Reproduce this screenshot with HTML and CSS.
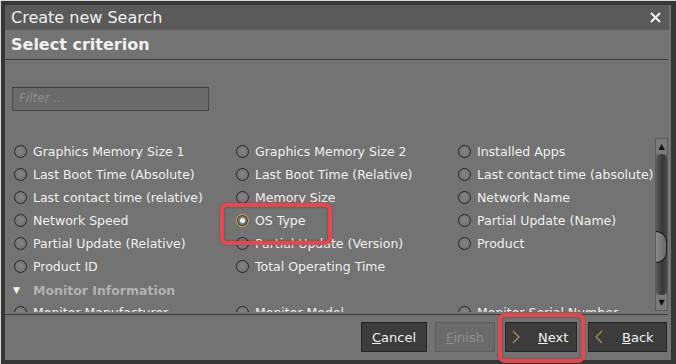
FILE: index.html
```html
<!DOCTYPE html>
<html>
<head>
<meta charset="utf-8">
<link rel="stylesheet" href="styles.css">
</head>
<body>
<div class="window">
  <div class="dialog">
    <div class="titlebar">
      <span class="title">Create new Search</span>
      <svg class="close" width="11" height="11" viewBox="0 0 11 11"><path d="M1 1 L10 10 M10 1 L1 10" stroke="#f4f4f4" stroke-width="2"/></svg>
    </div>
    <div class="header">Select criterion</div>
    <div class="content">
      <div class="filter">Filter ...</div>
      <div class="listarea">
        <div class="list">
          <div class="item"><span class="radio"></span>Graphics Memory Size 1</div>
          <div class="item"><span class="radio"></span>Graphics Memory Size 2</div>
          <div class="item"><span class="radio"></span>Installed Apps</div>
          <div class="item"><span class="radio"></span>Last Boot Time (Absolute)</div>
          <div class="item"><span class="radio"></span>Last Boot Time (Relative)</div>
          <div class="item"><span class="radio"></span>Last contact time (absolute)</div>
          <div class="item"><span class="radio"></span>Last contact time (relative)</div>
          <div class="item"><span class="radio"></span>Memory Size</div>
          <div class="item"><span class="radio"></span>Network Name</div>
          <div class="item"><span class="radio"></span>Network Speed</div>
          <div class="item"><span class="radio checked"></span>OS Type</div>
          <div class="item"><span class="radio"></span>Partial Update (Name)</div>
          <div class="item"><span class="radio"></span>Partial Update (Relative)</div>
          <div class="item"><span class="radio"></span>Partial Update (Version)</div>
          <div class="item"><span class="radio"></span>Product</div>
          <div class="item"><span class="radio"></span>Product ID</div>
          <div class="item"><span class="radio"></span>Total Operating Time</div>
          <div class="item"></div>
          <div class="group"><span class="tri">&#9660;</span>Monitor Information</div>
          <div class="item"><span class="radio"></span>Monitor Manufacturer</div>
          <div class="item"><span class="radio"></span>Monitor Model</div>
          <div class="item"><span class="radio"></span>Monitor Serial Number</div>
        </div>
        <div class="scrollbar">
          <div class="sb-btn">&#9650;</div>
          <div class="sb-track"><div class="sb-thumb"></div></div>
          <div class="sb-btn">&#9660;</div>
        </div>
      </div>
    </div>
    <div class="footer">
      <div class="btn cancel"><u>C</u>ancel</div>
      <div class="btn finish"><u>F</u>inish</div>
      <div class="btn next"><svg class="chev" width="8" height="14" viewBox="0 0 8 14"><path d="M1 1 L7 7 L1 13" fill="none" stroke="#b09455" stroke-width="1.2"/></svg><span class="lbl"><u>N</u>ext</span></div>
      <div class="btn back"><svg class="chev" width="8" height="14" viewBox="0 0 8 14"><path d="M7 1 L1 7 L7 13" fill="none" stroke="#b09455" stroke-width="1.2"/></svg><span class="lbl"><u>B</u>ack</span></div>
    </div>
  </div>
  <div class="mark mark-os"></div>
  <div class="mark mark-next"></div>
</div>
</body>
</html>
```

FILE: styles.css
```css
html, body {
  margin: 0;
  padding: 0;
  background: #2f2f2f;
}
.window {
  position: relative;
  width: 676px;
  height: 364px;
  box-sizing: border-box;
  border-left: 1px solid #d8d8d8;
  border-top: 1px solid #d8d8d8;
  background: #363636;
  padding: 4px 5px 4px 4px;
  font-family: "DejaVu Sans", sans-serif;
  color: #f0f0f0;
}
.dialog {
  width: 666px;
  height: 355px;
  background: #737373;
  display: flex;
  flex-direction: column;
}
.titlebar {
  height: 25px;
  background: #5a5a5a;
  display: flex;
  align-items: center;
  justify-content: space-between;
  padding: 0 5px 0 6px;
  margin-right: 2px;
  font-size: 16px;
}
.close {
  margin-right: 3px;
}
.header {
  height: 29px;
  display: flex;
  align-items: center;
  padding-left: 6px;
  font-size: 16px;
  font-weight: bold;
  border-bottom: 1px solid #3b3b3b;
  margin-right: 3px;
}
.content {
  height: 254px;
  display: flex;
  flex-direction: column;
}
.filter {
  margin: 27px 0 0 7px;
  width: 197px;
  height: 24px;
  box-sizing: border-box;
  background: #6a6a6a;
  border: 1px solid #4a4a4a;
  border-top-color: #3e3e3e;
  font-size: 12px;
  font-style: italic;
  color: #8c8c8c;
  padding-left: 6px;
  line-height: 21px;
}
.listarea {
  margin-top: 27px;
  height: 174px;
  display: flex;
}
.list {
  flex: 1;
  overflow: hidden;
  padding: 2px 0 0 8px;
  display: grid;
  grid-template-columns: 222px 222px 200px;
  grid-auto-rows: minmax(23px, auto);
  align-content: start;
}
.item {
  display: flex;
  align-items: center;
  font-size: 12.5px;
  color: #f0f0f0;
  white-space: nowrap;
}
.radio {
  width: 13px;
  height: 13px;
  box-sizing: border-box;
  border-radius: 50%;
  border: 1px solid #262626;
  background: radial-gradient(circle at 50% 45%, #858585 0%, #6c6c6c 100%);
  margin: 0 6px 0 1px;
  flex: none;
  position: relative;
}
.radio.checked {
  border: 1px solid #d9a838;
  box-shadow: inset 0 0 0 1px #3a3a3a;
}
.radio.checked::after {
  content: "";
  position: absolute;
  left: 3px;
  top: 3px;
  width: 5px;
  height: 5px;
  border-radius: 50%;
  background: #f2f2f2;
}
.group {
  grid-column: 1 / span 3;
  display: flex;
  align-items: flex-start;
  height: 27px;
  line-height: 25px;
  font-size: 12.5px;
  font-weight: bold;
  color: #b2b2b2;
}
.tri {
  color: #f4f4f4;
  font-size: 9px;
  width: 20px;
}
.scrollbar {
  width: 13px;
  height: 173px;
  margin-right: 3px;
  display: flex;
  flex-direction: column;
  background: #6a6a6a;
  border: 1px solid #5a5a5a;
  box-sizing: border-box;
}
.sb-btn {
  height: 15px;
  font-size: 8px;
  color: #111;
  text-align: center;
  line-height: 15px;
  background: #7a7a7a;
}
.sb-track {
  flex: 1;
  position: relative;
  border-radius: 6px;
  background: linear-gradient(to right, #5a5a5a, #383838 60%, #464646);
}
.sb-thumb {
  position: absolute;
  left: 0;
  top: 77px;
  width: 11px;
  height: 32px;
  border-radius: 0 16px 16px 0;
  border: 1px solid #1e1e1e;
  border-left: none;
  box-sizing: border-box;
  background: linear-gradient(to right, #8a8a8a, #6a6a6a);
}
.footer {
  flex: 1;
  border-top: 1px solid #3e3e3e;
  margin-right: 3px;
  display: flex;
  justify-content: flex-end;
  align-items: flex-start;
  padding: 7px 1px 0 0;
}
.btn {
  height: 30px;
  box-sizing: border-box;
  display: flex;
  align-items: center;
  font-size: 13px;
  color: #f0f0f0;
  background: #3c3c3c;
  border: 1px solid #262626;
}
.cancel {
  width: 66px;
  justify-content: center;
}
.finish {
  width: 60px;
  margin-left: 8px;
  justify-content: center;
  background: #6b6b6b;
  border-color: #5c5c5c;
  color: #8e8e8e;
}
.next {
  width: 72px;
  margin-left: 10px;
  padding-left: 6px;
}
.back {
  width: 79px;
  margin-left: 11px;
  padding-left: 6px;
}
.next .lbl {
  margin-left: 18px;
}
.back .lbl {
  margin-left: 19px;
}
.mark {
  position: absolute;
  border: 4px solid #e5474c;
  border-radius: 7px;
  box-sizing: border-box;
  box-shadow: inset 0 0 3px rgba(0,0,0,0.35), 0 0 2px rgba(0,0,0,0.3);
}
.mark-os {
  left: 219px;
  top: 202px;
  width: 112px;
  height: 42px;
}
.mark-next {
  left: 497px;
  top: 312px;
  width: 87px;
  height: 50px;
}
```
